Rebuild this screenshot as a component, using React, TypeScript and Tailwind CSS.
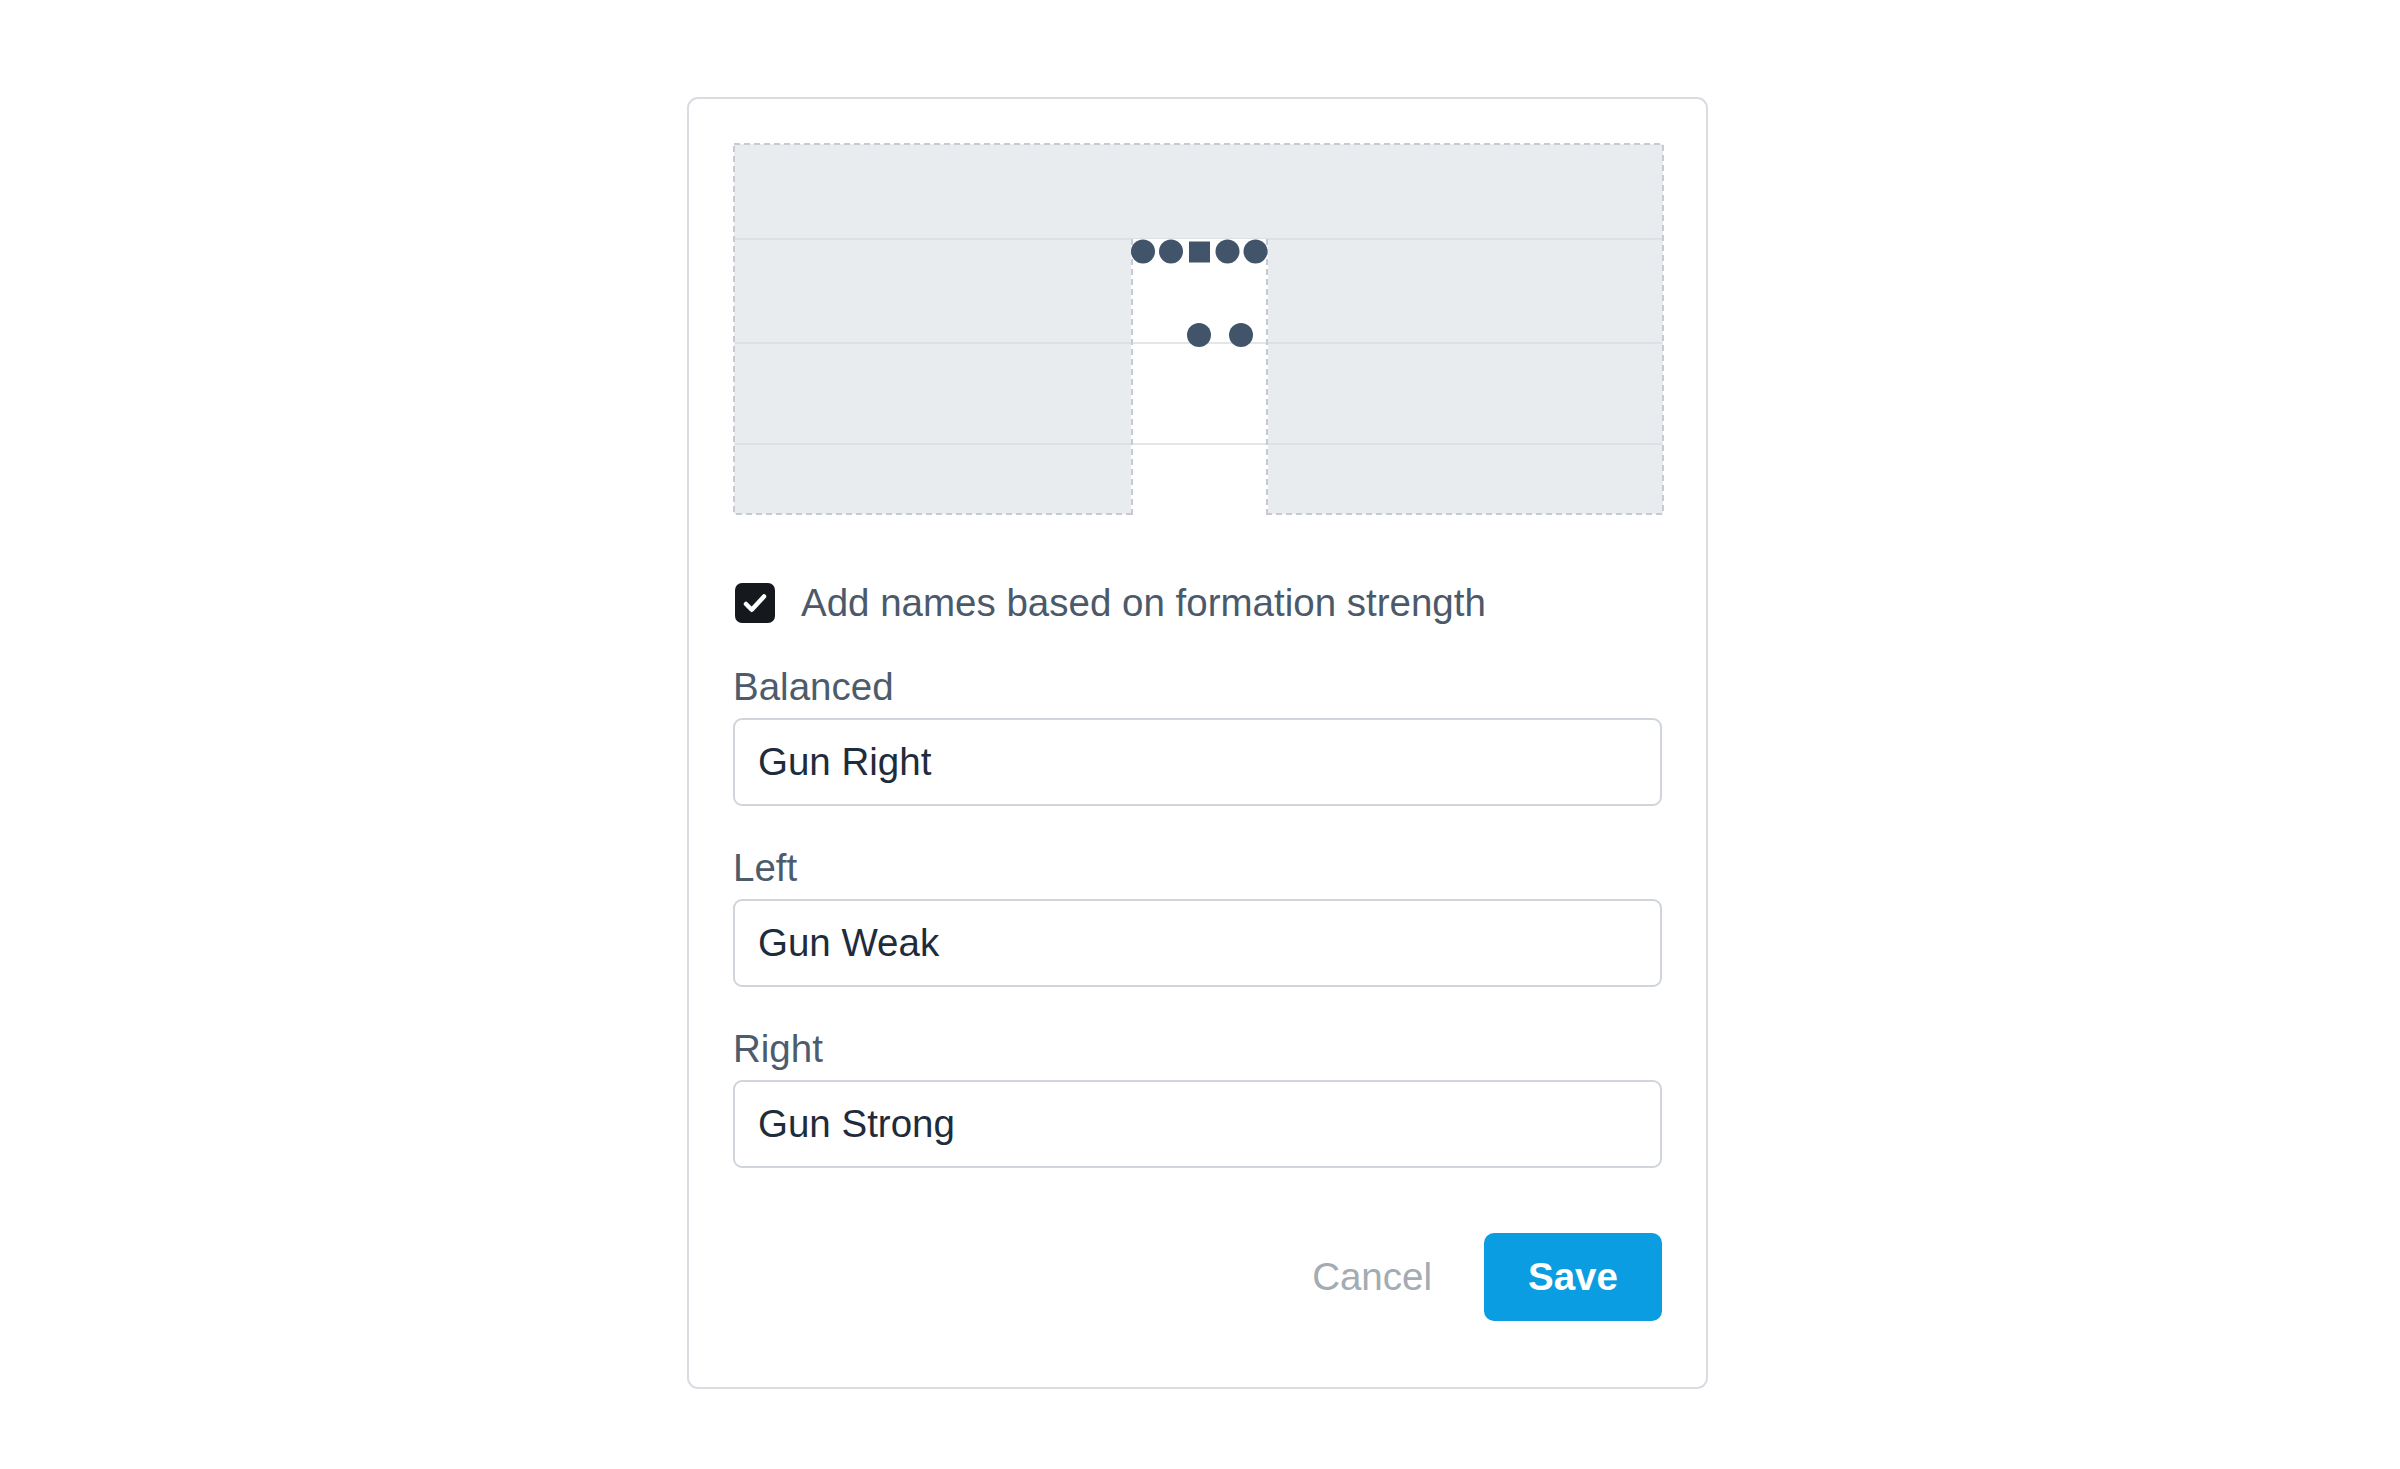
import React from "react";

function Field() {
  const dash = "#c7cbd1";
  const line = "#dde0e4";
  const player = "#425469";
  return (
    <svg width="931" height="372" viewBox="0 0 931 372" className="block">
      <rect x="1" y="1" width="929" height="370" fill="#e9ecef" stroke={dash} strokeWidth="2" strokeDasharray="6 4" />
      <line x1="2" y1="96" x2="929" y2="96" stroke={line} strokeWidth="2" />
      <line x1="2" y1="200" x2="929" y2="200" stroke={line} strokeWidth="2" />
      <line x1="2" y1="301" x2="929" y2="301" stroke={line} strokeWidth="2" />
      <rect x="398" y="96" width="137" height="276" fill="#ffffff" />
      <line x1="399" y1="200" x2="534" y2="200" stroke="#e3e6e9" strokeWidth="2" />
      <line x1="399" y1="301" x2="534" y2="301" stroke="#e3e6e9" strokeWidth="2" />
      <line x1="399" y1="96" x2="399" y2="372" stroke={dash} strokeWidth="2" strokeDasharray="6 4" />
      <line x1="534" y1="96" x2="534" y2="372" stroke={dash} strokeWidth="2" strokeDasharray="6 4" />
      <circle cx="410" cy="108.5" r="12" fill={player} />
      <circle cx="438" cy="108.5" r="12" fill={player} />
      <rect x="456" y="98.5" width="21" height="21" fill={player} />
      <circle cx="494.5" cy="108.5" r="12" fill={player} />
      <circle cx="522.5" cy="108.5" r="12" fill={player} />
      <circle cx="466" cy="192" r="12" fill={player} />
      <circle cx="508" cy="192" r="12" fill={player} />
    </svg>
  );
}

function LabeledInput({ label, value }: { label: string; value: string }) {
  return (
    <div className="flex flex-col">
      <div className="h-[44px] leading-[44px] text-[38.5px] text-[#4d5c6d]">{label}</div>
      <div className="mt-[9px] h-[88px] rounded-[9px] border-2 border-[#d0d5db] bg-white pl-[23px] flex items-center text-[38.5px] text-[#1f2c3c]">
        {value}
      </div>
    </div>
  );
}

export default function App() {
  return (
    <div
      className="w-[2400px] h-[1469px] bg-white"
      style={{ fontFamily: '"Liberation Sans", Arial, Helvetica, sans-serif' }}
    >
      <div className="pt-[97px] pl-[687px]">
        <div className="w-[1021px] rounded-[11px] border-2 border-[#d9dde1] bg-white px-[44px] pt-[44px] pb-[66px]">
          <Field />
          <div className="mt-[66px] h-[44px] flex items-center">
            <div className="ml-[2px] w-[40px] h-[40px] rounded-[7px] bg-[#15191d] flex items-center justify-center">
              <svg width="30" height="30" viewBox="0 0 24 24" fill="none">
                <path d="M4.8 12.8l4.6 4.6L19.2 6.8" stroke="#ffffff" strokeWidth="3.6" strokeLinecap="round" strokeLinejoin="round" />
              </svg>
            </div>
            <span className="ml-[26px] text-[38.5px] leading-[44px] text-[#4b5a6b]">
              Add names based on formation strength
            </span>
          </div>
          <div className="mt-[40px] flex flex-col gap-[40px]">
            <LabeledInput label="Balanced" value="Gun Right" />
            <LabeledInput label="Left" value="Gun Weak" />
            <LabeledInput label="Right" value="Gun Strong" />
          </div>
          <div className="mt-[65px] flex justify-end items-center">
            <button className="text-[38.5px] text-[#a3abb3] bg-transparent">Cancel</button>
            <button className="ml-[52px] w-[178px] h-[88px] rounded-[10px] bg-[#0a9de2] text-white font-bold text-[38.5px] flex items-center justify-center">
              Save
            </button>
          </div>
        </div>
      </div>
    </div>
  );
}
